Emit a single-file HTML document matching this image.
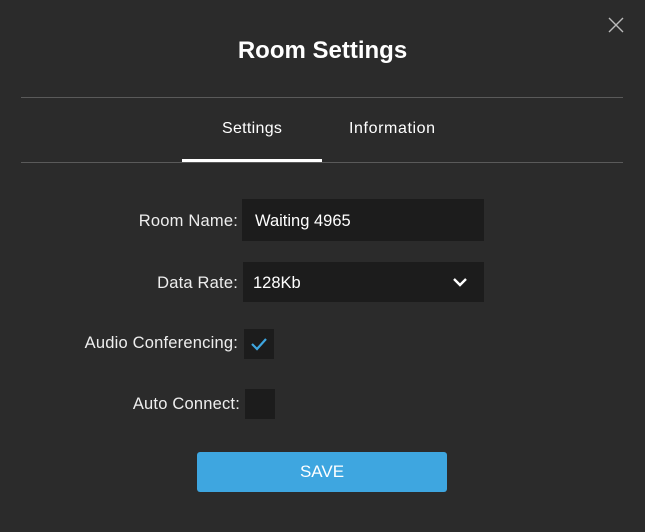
<!DOCTYPE html>
<html><head><style>
body{margin:0;width:645px;height:532px;background:#2b2b2b;font-family:"Liberation Sans",sans-serif;color:#fff;position:relative;overflow:hidden}
.a{position:absolute}
.lbl{position:absolute;right:407px;font-size:16.5px;color:#eee;white-space:nowrap;letter-spacing:0.2px}
.box{position:absolute;background:#1c1c1c}
</style></head><body>
<svg class="a" style="left:607px;top:16px" width="18" height="18"><path d="M2 2L16 16M16 2L2 16" stroke="#bbb" stroke-width="1.4"/></svg>
<div class="a" style="left:0;width:645px;top:37px;text-align:center;font-size:24px;font-weight:bold">Room Settings</div>
<div class="a" style="left:21px;width:602px;top:97px;height:1px;background:#5a5a5a"></div>
<div class="a" style="left:222px;top:120px;font-size:16px;letter-spacing:0.3px">Settings</div>
<div class="a" style="left:349px;top:120px;font-size:16px;letter-spacing:0.6px">Information</div>
<div class="a" style="left:21px;width:602px;top:162px;height:1px;background:#5a5a5a"></div>
<div class="a" style="left:182px;width:140px;top:159px;height:3px;background:#fff"></div>
<div class="lbl" style="top:212px">Room Name:</div>
<div class="box" style="left:242px;top:199px;width:242px;height:42px"></div>
<div class="a" style="left:255px;top:212px;font-size:16.5px">Waiting 4965</div>
<div class="lbl" style="top:274px">Data Rate:</div>
<div class="box" style="left:243px;top:262px;width:241px;height:40px"></div>
<div class="a" style="left:253px;top:274px;font-size:16.5px">128Kb</div>
<svg class="a" style="left:452px;top:276px" width="16" height="12"><path d="M2 3L8 9L14 3" stroke="#fff" stroke-width="2.4" fill="none"/></svg>
<div class="lbl" style="top:334px">Audio Conferencing:</div>
<div class="box" style="left:244px;top:329px;width:30px;height:30px"></div>
<svg class="a" style="left:250px;top:335px" width="18" height="18"><path d="M2 9L7 14L16 4" stroke="#3ea6e0" stroke-width="2.2" fill="none"/></svg>
<div class="lbl" style="top:395px;right:405px">Auto Connect:</div>
<div class="box" style="left:245px;top:389px;width:30px;height:30px"></div>
<div class="a" style="left:197px;top:452px;width:250px;height:40px;background:#3ea6e0;border-radius:3px;text-align:center;line-height:40px;font-size:17px">SAVE</div>
</body></html>
